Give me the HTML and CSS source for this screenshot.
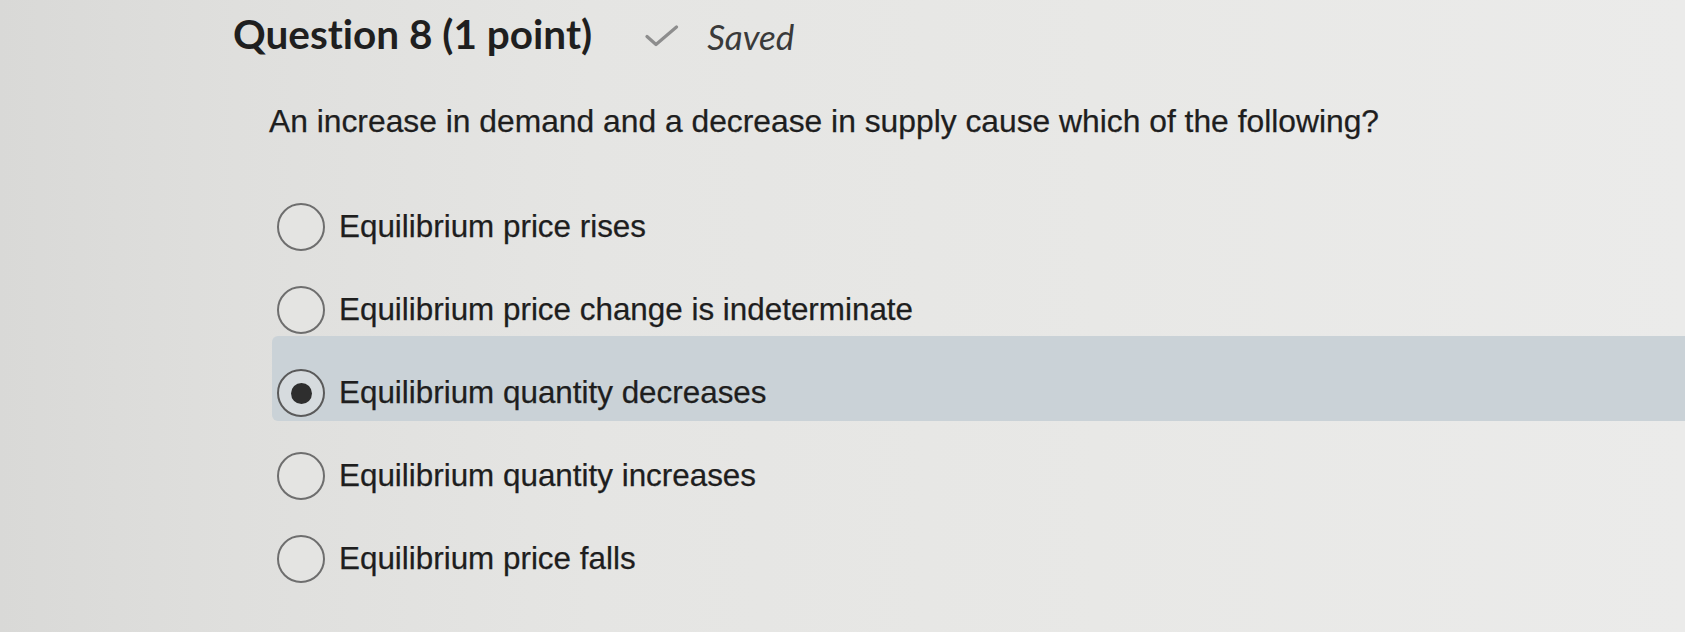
FILE: index.html
```html
<!DOCTYPE html>
<html lang="en">
<head>
<meta charset="utf-8">
<title>Question 8</title>
<link rel="stylesheet" href="styles.css">
</head>
<body>
<div class="page">
  <header class="q-header">
    <h1 class="q-title">Question 8 (1 point)</h1>
    <span class="q-status">
      <svg class="check" viewBox="0 0 34 22" width="34" height="22" aria-hidden="true">
        <path d="M2 11.5 L11 19.5 L31.5 2" fill="none" stroke="#8d8d8d" stroke-width="3.2" stroke-linecap="round" stroke-linejoin="round"/>
      </svg>
      <span class="saved">Saved</span>
    </span>
  </header>
  <p class="q-text">An increase in demand and a decrease in supply cause which of the following?</p>
  <ul class="answers">
    <li class="answer"><span class="radio"></span><span class="label">Equilibrium price rises</span></li>
    <li class="answer"><span class="radio"></span><span class="label">Equilibrium price change is indeterminate</span></li>
    <li class="answer selected"><span class="radio checked"><span class="dot"></span></span><span class="label">Equilibrium quantity decreases</span></li>
    <li class="answer"><span class="radio"></span><span class="label">Equilibrium quantity increases</span></li>
    <li class="answer"><span class="radio"></span><span class="label">Equilibrium price falls</span></li>
  </ul>
</div>
</body>
</html>
```

FILE: styles.css
```css
* { box-sizing: border-box; }

html, body {
  margin: 0;
  padding: 0;
  width: 1685px;
  height: 632px;
  overflow: hidden;
}

body {
  background: linear-gradient(90deg, #d9d9d7 0%, #dfdfdd 14%, #e5e5e3 35%, #e8e8e6 65%, #ebebea 100%);
  color: #222;
}

.page {
  padding-top: 10px;
}

.q-header {
  display: flex;
  align-items: center;
  padding-left: 233px;
  height: 48px;
}

.q-title {
  margin: 0;
  font-family: Lato, "Open Sans", sans-serif;
  font-weight: 700;
  font-size: 40.5px;
  line-height: 48px;
  font-variant-ligatures: none;
  color: #1f1f1f;
}

.q-status {
  display: flex;
  align-items: center;
  margin-left: 53px;
  padding-top: 4px;
}

.check {
  display: block;
  margin-right: 28px;
}

.saved {
  font-family: Lato, "Open Sans", sans-serif;
  font-style: italic;
  font-size: 35px;
  line-height: 48px;
  color: #3a3a3a;
}

.q-text {
  margin: 45px 0 0 269px;
  font-family: "Liberation Sans", Arial, sans-serif;
  font-size: 31.8px;
  line-height: 36px;
  color: #1e1e1e;
  -webkit-text-stroke: 0.25px #1e1e1e;
}

.answers {
  list-style: none;
  margin: 47px 0 0 0;
  padding: 0 0 0 272px;
}

.answer {
  display: flex;
  align-items: center;
  padding: 17px 0 18px 5px;
}

.answer.selected {
  background: #cad2d7;
  border-radius: 6px 0 0 6px;
  margin-top: -16px;
  margin-bottom: 14px;
  padding-top: 33px;
  padding-bottom: 4px;
}

.radio {
  width: 48px;
  height: 48px;
  flex: none;
  border: 2px solid #6e6e6e;
  border-radius: 50%;
  background: #e4e4e2;
  display: flex;
  align-items: center;
  justify-content: center;
}

.radio.checked {
  border-color: #5a5a5a;
  background: #d6dbde;
}

.dot {
  width: 21px;
  height: 21px;
  border-radius: 50%;
  background: #2e2e2e;
}

.label {
  margin-left: 14px;
  font-family: "Liberation Sans", Arial, sans-serif;
  font-size: 31.4px;
  line-height: 36px;
  color: #1e1e1e;
  -webkit-text-stroke: 0.25px #1e1e1e;
}
```
